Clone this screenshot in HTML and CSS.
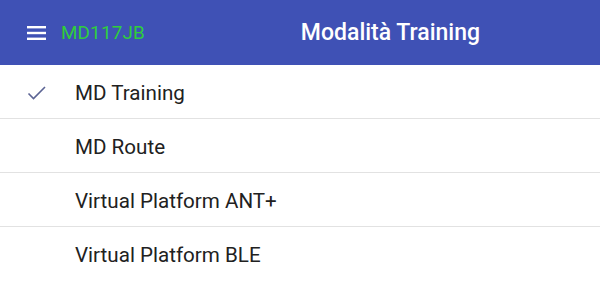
FILE: index.html
```html
<!DOCTYPE html>
<html>
<head>
<meta charset="utf-8">
<link rel="stylesheet" href="styles.css">
</head>
<body>
<header class="bar">
  <div class="left">
    <svg class="menu" width="20" height="14" viewBox="0 0 20 14"><rect x="0" y="0" width="19" height="2.4" fill="#fff"/><rect x="0" y="5.8" width="19" height="2.4" fill="#fff"/><rect x="0" y="11.6" width="19" height="2.4" fill="#fff"/></svg>
    <span class="device">MD117JB</span>
  </div>
  <div class="title">Modalità Training</div>
</header>
<ul class="list">
  <li class="item"><span class="check"><svg width="20" height="16" viewBox="0 0 20 16"><path d="M1.5 8.5 L6.5 13.5 L18 2" fill="none" stroke="#5c6494" stroke-width="1.6"/></svg></span><span class="label">MD Training</span></li>
  <li class="item"><span class="check"></span><span class="label">MD Route</span></li>
  <li class="item"><span class="check"></span><span class="label">Virtual Platform ANT+</span></li>
  <li class="item"><span class="check"></span><span class="label">Virtual Platform BLE</span></li>
</ul>
</body>
</html>
```
FILE: styles.css
```css
html, body { margin: 0; padding: 0; background: #fff; font-family: Roboto, "Liberation Sans", sans-serif; }
.bar { height: 65px; background: #3f51b5; display: flex; align-items: center; position: relative; }
.left { display: flex; align-items: center; padding-left: 27px; gap: 14px; }
.menu { display: block; }
.device { color: #2fce3b; font-size: 18.8px; letter-spacing: 0.2px; }
.title { color: #fff; font-size: 23px; font-weight: 500; margin-left: 156px; }
.list { list-style: none; margin: 0; padding: 0; }
.item { height: 53px; display: flex; align-items: center; border-bottom: 1px solid #e2e2e2; }
.item:last-child { border-bottom: none; }
.check { width: 75px; display: flex; justify-content: flex-start; padding-left: 27px; box-sizing: border-box; padding-top: 2px; }
.label { font-size: 20.6px; color: #212121; padding-top: 3px; }
```
